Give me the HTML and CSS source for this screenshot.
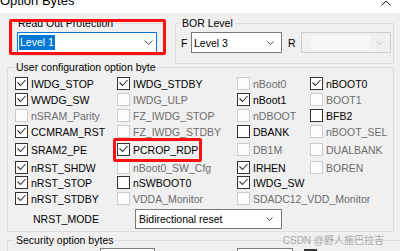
FILE: index.html
```html
<!DOCTYPE html>
<html lang="en">
<head>
    <meta charset="UTF-8">
    <meta name="viewport" content="width=device-width, initial-scale=1.0">
    <title>Option Bytes</title>
    <link rel="stylesheet" href="styles.css">
</head>
<body>
    <div class="titlebar">
        <span class="title">Option Bytes</span>
        <svg class="collapse" width="10" height="6" viewBox="0 0 10 6"><polyline points="0.5,5.5 5,1 9.5,5.5"/></svg>
    </div>

    <div class="top-row">
        <fieldset class="group rop">
            <legend>Read Out Protection</legend>
            <div class="combo focused rop-combo">
                <span class="selected">Level 1</span>
                <svg class="chevron" width="9" height="5" viewBox="0 0 9 5"><polyline points="0.5,0.5 4.5,4.5 8.5,0.5"/></svg>
            </div>
        </fieldset>

        <fieldset class="group bor">
            <legend>BOR Level</legend>
            <div class="bor-row">
                <span class="bor-label">F</span>
                <div class="combo level-combo">
                    <span>Level 3</span>
                    <svg class="chevron" width="7" height="4" viewBox="0 0 7 4"><polyline points="0.5,0.5 3.5,3.5 6.5,0.5"/></svg>
                </div>
                <span class="bor-label r-label">R</span>
                <div class="combo disabled level-combo">
                    <span class="field"></span>
                    <svg class="chevron" width="7" height="4" viewBox="0 0 7 4"><polyline points="0.5,0.5 3.5,3.5 6.5,0.5"/></svg>
                </div>
            </div>
        </fieldset>
    </div>

    <fieldset class="group user">
        <legend>User configuration option byte</legend>
        <div class="opt-grid">
            <!-- row 1 -->
            <div class="opt"><span class="box"><svg class="tick" viewBox="0 0 11 11"><path d="M1.5 4.5 4.5 7.5 9.5 2"/></svg></span>IWDG_STOP</div>
            <div class="opt"><span class="box"><svg class="tick" viewBox="0 0 11 11"><path d="M1.5 4.5 4.5 7.5 9.5 2"/></svg></span>IWDG_STDBY</div>
            <div class="opt off"><span class="box"></span>nBoot0</div>
            <div class="opt"><span class="box"><svg class="tick" viewBox="0 0 11 11"><path d="M1.5 4.5 4.5 7.5 9.5 2"/></svg></span>nBOOT0</div>
            <!-- row 2 -->
            <div class="opt"><span class="box"><svg class="tick" viewBox="0 0 11 11"><path d="M1.5 4.5 4.5 7.5 9.5 2"/></svg></span>WWDG_SW</div>
            <div class="opt off"><span class="box"></span>IWDG_ULP</div>
            <div class="opt"><span class="box"><svg class="tick" viewBox="0 0 11 11"><path d="M1.5 4.5 4.5 7.5 9.5 2"/></svg></span>nBoot1</div>
            <div class="opt off"><span class="box"></span>BOOT1</div>
            <!-- row 3 -->
            <div class="opt off"><span class="box"></span>nSRAM_Parity</div>
            <div class="opt off"><span class="box"></span>FZ_IWDG_STOP</div>
            <div class="opt off"><span class="box"></span>nDBOOT</div>
            <div class="opt"><span class="box"></span>BFB2</div>
            <!-- row 4 -->
            <div class="opt"><span class="box"><svg class="tick" viewBox="0 0 11 11"><path d="M1.5 4.5 4.5 7.5 9.5 2"/></svg></span>CCMRAM_RST</div>
            <div class="opt off"><span class="box"></span>FZ_IWDG_STDBY</div>
            <div class="opt"><span class="box"></span>DBANK</div>
            <div class="opt off"><span class="box"></span>nBOOT_SEL</div>
            <!-- row 5 -->
            <div class="opt"><span class="box"><svg class="tick" viewBox="0 0 11 11"><path d="M1.5 4.5 4.5 7.5 9.5 2"/></svg></span>SRAM2_PE</div>
            <div class="opt"><span class="box"><svg class="tick" viewBox="0 0 11 11"><path d="M1.5 4.5 4.5 7.5 9.5 2"/></svg></span>PCROP_RDP</div>
            <div class="opt off"><span class="box"></span>DB1M</div>
            <div class="opt off"><span class="box"></span>DUALBANK</div>
            <!-- row 6 -->
            <div class="opt"><span class="box"><svg class="tick" viewBox="0 0 11 11"><path d="M1.5 4.5 4.5 7.5 9.5 2"/></svg></span>nRST_SHDW</div>
            <div class="opt off"><span class="box"></span>nBoot0_SW_Cfg</div>
            <div class="opt"><span class="box"><svg class="tick" viewBox="0 0 11 11"><path d="M1.5 4.5 4.5 7.5 9.5 2"/></svg></span>IRHEN</div>
            <div class="opt off"><span class="box"></span>BOREN</div>
            <!-- row 7 -->
            <div class="opt"><span class="box"><svg class="tick" viewBox="0 0 11 11"><path d="M1.5 4.5 4.5 7.5 9.5 2"/></svg></span>nRST_STOP</div>
            <div class="opt"><span class="box"></span>nSWBOOT0</div>
            <div class="opt"><span class="box"><svg class="tick" viewBox="0 0 11 11"><path d="M1.5 4.5 4.5 7.5 9.5 2"/></svg></span>IWDG_SW</div>
            <div></div>
            <!-- row 8 -->
            <div class="opt"><span class="box"><svg class="tick" viewBox="0 0 11 11"><path d="M1.5 4.5 4.5 7.5 9.5 2"/></svg></span>nRST_STDBY</div>
            <div class="opt off"><span class="box"></span>VDDA_Monitor</div>
            <div class="opt off"><span class="box"></span>SDADC12_VDD_Monitor</div>
            <div></div>
        </div>

        <div class="mode-row">
            <span class="mode-label">NRST_MODE</span>
            <div class="combo mode-combo">
                <span>Bidirectional reset</span>
                <svg class="chevron" width="7" height="4" viewBox="0 0 7 4"><polyline points="0.5,0.5 3.5,3.5 6.5,0.5"/></svg>
            </div>
        </div>
    </fieldset>

    <fieldset class="group security">
        <legend>Security option bytes</legend>
        <div class="sec-row">
            <span class="sec-input first"></span>
            <span class="sec-input second"></span>
            <span class="sec-check"></span>
        </div>
    </fieldset>

    <!-- annotation marks drawn over the dialog -->
    <div class="mark mark-rop"></div>
    <div class="mark mark-pcrop"></div>
    <div class="watermark">CSDN @野人施巴拉吉</div>
</body>
</html>
```

FILE: styles.css
```css
* {
    box-sizing: border-box;
}

body {
    margin: 0;
    width: 400px;
    height: 251px;
    overflow: hidden;
    position: relative;
    background-color: #f0f0f0;
    font-family: "Liberation Sans", Arial, sans-serif;
    font-size: 10.5px;
    color: #000000;
}

.titlebar {
    height: 13px;
    background-color: #ffffff;
    display: flex;
    justify-content: space-between;
    overflow: hidden;
}

.title {
    font-size: 13px;
    line-height: 13px;
    margin-top: -6px;
    white-space: nowrap;
}

.collapse {
    margin-right: 9px;
    fill: none;
    stroke: #1a1a1a;
    stroke-width: 1;
}

/* group boxes */
.group {
    margin: 0;
    padding: 0;
    border: 1px solid #dcdcdc;
    min-width: 0;
}

.group legend {
    padding: 0 2px;
    margin-left: -1px;
    line-height: 12px;
    white-space: nowrap;
}

.top-row {
    display: flex;
    margin-top: 4px;
    height: 47px;
}

.rop {
    margin-left: 12px;
    width: 152px;
    height: 39px;
    padding: 3px 0 0 4px;
}

.bor {
    margin-left: 11px;
    width: 219px;
    height: 47px;
    padding: 3px 0 0 5px;
}

.bor-row {
    display: flex;
    align-items: center;
}

.bor-label {
    width: 10px;
}

.r-label {
    width: 13px;
    margin-left: 6px;
}

/* combo boxes */
.combo {
    display: flex;
    align-items: center;
    justify-content: space-between;
    height: 21px;
    padding: 0 7px 0 2px;
    background-color: #ffffff;
    border: 1px solid #7a7a7a;
    white-space: nowrap;
}

.chevron {
    fill: none;
    stroke: #555555;
    stroke-width: 1;
}

.rop-combo {
    width: 140px;
    padding: 0 3px 0 1px;
}

.focused {
    border-color: #0078d7;
}

.selected {
    background-color: #0078d7;
    color: #ffffff;
    line-height: 15px;
    padding: 0 1px;
}

.level-combo {
    width: 91px;
}

.disabled {
    width: 90px;
    border-color: #cccccc;
    background-color: #f0f0f0;
    padding-left: 9px;
}

.disabled .field {
    width: 59px;
    height: 15px;
    background-color: #f7f7f7;
}

.disabled .chevron {
    stroke: #bfbfbf;
}

/* user configuration */
.user {
    margin: -3px 0 0 7px;
    width: 387px;
    padding: 4px 0 2px 7px;
}

.opt-grid {
    display: grid;
    grid-template-columns: 102px 120px 73px auto;
    grid-template-rows: 16px 16px 16px 18px 18px 15px 16px 17px;
}

.opt {
    display: flex;
    align-items: center;
    height: 13px;
    white-space: nowrap;
}

.box {
    width: 13px;
    height: 13px;
    margin-right: 3px;
    flex-shrink: 0;
    border: 1px solid #333333;
    background-color: #ffffff;
}

.tick {
    display: block;
    width: 11px;
    height: 11px;
    fill: none;
    stroke: #333333;
    stroke-width: 1.1;
}

.off {
    color: #6d6d6d;
}

.off .box {
    border-color: #cccccc;
    background-color: #fcfcfc;
}

.mode-row {
    display: flex;
    align-items: center;
    height: 20px;
}

.mode-label {
    width: 120px;
    padding-left: 18px;
}

.mode-combo {
    width: 147px;
    height: 20px;
    padding-left: 3px;
    padding-right: 8px;
}

/* security */
.security {
    margin: 2px 0 0 7px;
    width: 400px;
    height: 40px;
    padding: 2px 0 0 7px;
}

.sec-row {
    display: flex;
    align-items: flex-start;
}

.sec-input {
    height: 20px;
    border: 1px solid #7a7a7a;
    background-color: #ffffff;
}

.first {
    width: 55px;
    margin-left: 85px;
}

.second {
    width: 56px;
    margin-left: 82px;
}

.sec-check {
    width: 13px;
    height: 13px;
    margin: 1px 0 0 11px;
    border: 2px solid #333333;
    background-color: #ffffff;
}

/* annotations on top of the screenshot */
.mark {
    position: absolute;
    border: 3px solid #ff1010;
    border-radius: 2px;
}

.mark-rop {
    left: 9px;
    top: 19px;
    width: 157px;
    height: 36px;
}

.mark-pcrop {
    left: 113px;
    top: 138px;
    width: 89px;
    height: 24px;
}

.watermark {
    position: absolute;
    right: 16px;
    top: 232px;
    font-family: "Liberation Sans", "Noto Sans CJK SC", sans-serif;
    font-size: 10px;
    color: #a8a8a8;
    white-space: nowrap;
}
```
